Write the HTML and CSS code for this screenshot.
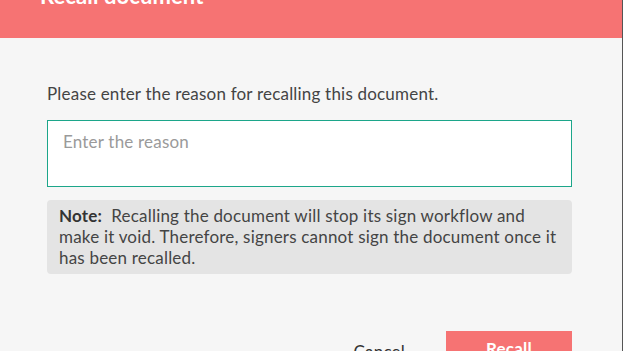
FILE: index.html
```html
<!DOCTYPE html>
<html lang="en">

<head>
  <meta charset="UTF-8">
  <title>Recall document</title>
  <link rel="stylesheet" href="styles.css">
</head>

<body>
  <div class="dialog">
    <div class="dialog-header">
      <h2 class="dialog-title">Recall document</h2>
    </div>
    <div class="dialog-body">
      <p class="prompt">Please enter the reason for recalling this document.</p>
      <textarea class="reason" placeholder="Enter the reason"></textarea>
      <div class="note">
        <b>Note:</b>&nbsp; Recalling the document will stop its sign workflow and make it void. Therefore, signers cannot sign the document once it has been recalled.
      </div>
    </div>
    <div class="dialog-footer">
      <button class="cancel-btn">Cancel</button>
      <button class="recall-btn">Recall</button>
    </div>
  </div>
</body>

</html>
```

FILE: styles.css
```css
body {
  margin: 0;
  background-color: #f6f6f6;
  font-family: Lato, "Open Sans", sans-serif;
  overflow: hidden;
}

.dialog {
  width: 622px;
  height: 351px;
  background-color: #f6f6f6;
  border-right: 1px solid #555;
  overflow: hidden;
}

.dialog-header {
  height: 38px;
  background-color: #f67373;
  padding: 0 40px;
  overflow: hidden;
}

.dialog-title {
  margin: -17px 0 0;
  font-size: 22px;
  font-weight: bold;
  line-height: 26px;
  letter-spacing: 0.1px;
  color: #fff;
}

.dialog-body {
  padding: 45px 50px 0 47px;
  font-size: 17px;
  letter-spacing: 0.2px;
}

.prompt {
  margin: 0 0 15px;
  line-height: 22px;
  color: #444;
}

.reason {
  display: block;
  width: 100%;
  height: 67px;
  box-sizing: border-box;
  margin: 0;
  padding: 10px 15px;
  border: 1px solid #1ca68a;
  border-radius: 0;
  background-color: #fff;
  font-family: inherit;
  font-size: 17px;
  letter-spacing: 0.2px;
  color: #444;
  resize: none;
  outline: none;
}

.reason::placeholder {
  color: #9a9a9a;
}

.note {
  margin-top: 13px;
  padding: 5px 12px 6px;
  background-color: #e4e4e4;
  border-radius: 4px;
  line-height: 21px;
  color: #444;
}

.note b {
  color: #333;
}

.dialog-footer {
  display: flex;
  justify-content: flex-end;
  align-items: flex-start;
  gap: 21px;
  padding: 57px 50px 0 0;
}

.cancel-btn,
.recall-btn {
  border: none;
  font-family: inherit;
  font-size: 17px;
  line-height: 20px;
  letter-spacing: 0.2px;
  cursor: pointer;
}

.cancel-btn {
  background: none;
  color: #333;
  padding: 11px 20px;
}

.recall-btn {
  width: 126px;
  padding: 8px 0;
  background-color: #f67373;
  color: #fff;
  font-weight: bold;
}
```
